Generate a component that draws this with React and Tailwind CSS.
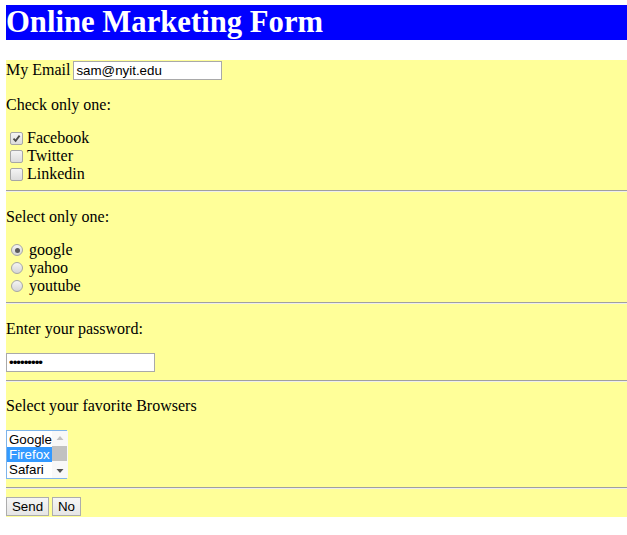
export default function App() {
  return (
    <div className="min-h-[535px] bg-white pl-[6px] pt-[5px] font-['Liberation_Serif',serif] text-[16px] text-black">
      <h1 className="h-[35px] bg-[#0000ff] text-[30.7px] font-bold leading-[35px] text-white">Online Marketing Form</h1>
      <MarketingForm />
    </div>
  );
}

function MarketingForm() {
  return (
    <form className="mt-[20px] bg-[#ffff99] pb-[1px] leading-[18px]" onSubmit={(e) => e.preventDefault()}>
      <div className="flex h-[20px] items-center">
        <span>My Email</span>
        <TextBox className="ml-[3px] w-[149px]" value="sam@nyit.edu" />
      </div>

      <p className="mt-[16px]">Check only one:</p>
      <div className="mt-[15px]">
        <CheckRow label="Facebook" checked />
        <CheckRow label="Twitter" />
        <CheckRow label="Linkedin" />
      </div>
      <Rule className="mt-[7px]" />

      <p className="mt-[16px]">Select only one:</p>
      <div className="mt-[15px]">
        <RadioRow label="google" checked />
        <RadioRow label="yahoo" />
        <RadioRow label="youtube" />
      </div>
      <Rule className="mt-[7px]" />

      <p className="mt-[16px]">Enter your password:</p>
      <TextBox className="mt-[15px] w-[149px]" value="•••••••••" small />
      <Rule className="mt-[8px]" />

      <p className="mt-[15px]">Select your favorite Browsers</p>
      <ListBox />
      <Rule className="mt-[8px]" />

      <div className="mt-[8px] flex gap-[3px]">
        <Btn className="w-[43px]">Send</Btn>
        <Btn className="w-[29px]">No</Btn>
      </div>
    </form>
  );
}

function Rule({ className }) {
  return <div className={"h-[2px] border-t border-b border-t-[#a0a0a0] border-b-[#eeeeee] " + className} />;
}

function TextBox({ value, className, small }) {
  return (
    <div
      className={
        "flex h-[19px] items-center border border-[#a9a9a9] bg-white px-[2px] font-['Liberation_Sans',sans-serif] text-[13.33px] leading-[15px] " +
        (small ? "tracking-[-1px] text-[11px] " : "") +
        className
      }
    >
      {value}
    </div>
  );
}

function CheckRow({ label, checked }) {
  return (
    <div className="flex h-[18px] items-center">
      <span className="ml-[4px] mr-[4px] flex h-[13px] w-[13px] items-center justify-center rounded-[2px] border border-[#a6a6a6] bg-gradient-to-b from-[#f4f4f4] to-[#dcdcdc]">
        {checked && (
          <svg width="9" height="9" viewBox="0 0 9 9">
            <path d="M1.5 4.6 L3.6 6.8 L7.6 1.6" fill="none" stroke="#4a4a4a" strokeWidth="1.8" />
          </svg>
        )}
      </span>
      <span>{label}</span>
    </div>
  );
}

function RadioRow({ label, checked }) {
  return (
    <div className="flex h-[18px] items-center">
      <span className="ml-[5px] mr-[6px] flex h-[12px] w-[12px] items-center justify-center rounded-full border border-[#a6a6a6] bg-gradient-to-b from-[#f4f4f4] to-[#d6d6d6]">
        {checked && <span className="h-[5px] w-[5px] rounded-full bg-[#5a5a5a]" />}
      </span>
      <span>{label}</span>
    </div>
  );
}

function ListBox() {
  const items = ["Google", "Firefox", "Safari"];
  return (
    <div className="mt-[15px] flex h-[49px] w-[61px] border border-[#7eb4ea] bg-white font-['Liberation_Sans',sans-serif] text-[13.33px] leading-[15px]">
      <div className="flex-1 pt-[1px]">
        {items.map((item) => (
          <div key={item} className={"h-[15px] pl-[2px] " + (item === "Firefox" ? "bg-[#3399ff] text-white" : "")}>
            {item}
          </div>
        ))}
      </div>
      <div className="flex w-[16px] flex-col items-center bg-[#f8f8f8]">
        <svg width="16" height="15" viewBox="0 0 16 15">
          <path d="M4.5 9 L8 5 L11.5 9 Z" fill="#c2c2c2" />
        </svg>
        <div className="h-[15px] w-[15px] bg-[#c1c1c1]" />
        <div className="flex-1" />
        <svg width="16" height="15" viewBox="0 0 16 15">
          <path d="M4.5 6 L11.5 6 L8 10 Z" fill="#505050" />
        </svg>
      </div>
    </div>
  );
}

function Btn({ children, className }) {
  return (
    <button
      type="submit"
      className={
        "flex h-[19px] items-center justify-center border border-[#adadad] bg-gradient-to-b from-[#f6f6f6] to-[#e6e6e6] font-['Liberation_Sans',sans-serif] text-[13.33px] leading-[15px] text-black " +
        className
      }
    >
      {children}
    </button>
  );
}
